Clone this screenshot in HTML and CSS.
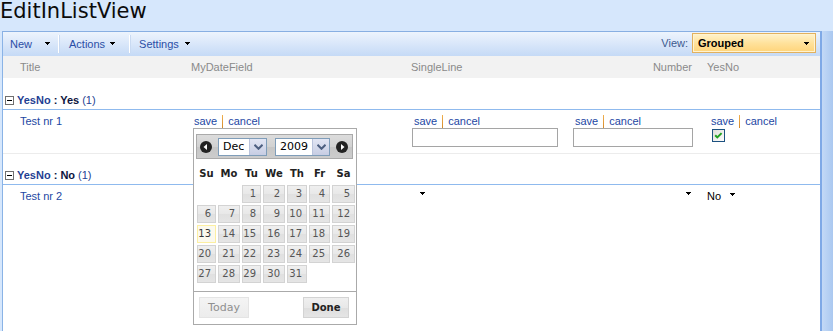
FILE: index.html
```html
<!DOCTYPE html>
<html>
<head>
<meta charset="utf-8">
<title>EditInListView</title>
<link rel="stylesheet" href="styles.css">
</head>
<body>
<div class="page">
  <h1 class="title">EditInListView</h1>
  <div class="content-row">
    <div class="panel">
      <div class="toolbar">
        <div class="tb-menu">
          <div class="tb-item tb-new"><span class="tb-text">New</span><svg class="arrow" width="5" height="3" viewBox="0 0 5 3"><path d="M0 0h5v1h-1v1h-1v1h-1v-1h-1v-1h-1z"/></svg></div>
          <div class="tb-sep"></div>
          <div class="tb-item tb-actions"><span class="tb-text">Actions</span><svg class="arrow" width="5" height="3" viewBox="0 0 5 3"><path d="M0 0h5v1h-1v1h-1v1h-1v-1h-1v-1h-1z"/></svg></div>
          <div class="tb-sep"></div>
          <div class="tb-item tb-settings"><span class="tb-text">Settings</span><svg class="arrow" width="5" height="3" viewBox="0 0 5 3"><path d="M0 0h5v1h-1v1h-1v1h-1v-1h-1v-1h-1z"/></svg></div>
        </div>
        <div class="tb-view">
          <span class="view-label">View:</span>
          <div class="view-select"><span class="view-value">Grouped</span><svg class="arrow" width="5" height="3" viewBox="0 0 5 3"><path d="M0 0h5v1h-1v1h-1v1h-1v-1h-1v-1h-1z"/></svg></div>
        </div>
      </div>

      <div class="cols colheads">
        <div class="c c1">Title</div>
        <div class="c c2">MyDateField</div>
        <div class="c c3">SingleLine</div>
        <div class="c c4">Number</div>
        <div class="c c5">YesNo</div>
      </div>

      <div class="gap-top"></div>

      <div class="group">
        <span class="grp-icon"></span>
        <span class="grp-field">YesNo</span><span class="grp-value"> : Yes</span><span class="grp-count">(1)</span>
      </div>

      <div class="cols row row-edit">
        <div class="c c1"><span class="cell-text">Test nr 1</span></div>
        <div class="c c2 edit"><div class="links"><a class="lnk">save</a><span class="bar"></span><a class="lnk">cancel</a></div></div>
        <div class="c c3 edit"><div class="links"><a class="lnk">save</a><span class="bar"></span><a class="lnk">cancel</a></div><div class="textbox tb-single"></div></div>
        <div class="c c4 edit"><div class="links"><a class="lnk">save</a><span class="bar"></span><a class="lnk">cancel</a></div><div class="textbox tb-number"></div></div>
        <div class="c c5 edit"><div class="links"><a class="lnk">save</a><span class="bar"></span><a class="lnk">cancel</a></div>
          <svg class="checkbox" width="13" height="13" viewBox="0 0 13 13">
            <defs><linearGradient id="cbg" x1="0" y1="0" x2="1" y2="1"><stop offset="0" stop-color="#dcdcd7"/><stop offset="1" stop-color="#ffffff"/></linearGradient></defs>
            <rect x="0.5" y="0.5" width="12" height="12" fill="url(#cbg)" stroke="#1c5180"/>
            <path d="M3.2 6.2L5.3 8.4 9.6 4.1" fill="none" stroke="#21a121" stroke-width="2"/>
          </svg>
        </div>
      </div>

      <div class="gap-mid"></div>

      <div class="group">
        <span class="grp-icon"></span>
        <span class="grp-field">YesNo</span><span class="grp-value"> : No</span><span class="grp-count">(1)</span>
      </div>

      <div class="cols row row-view">
        <div class="c c1"><span class="cell-text">Test nr 2</span></div>
        <div class="c c2"></div>
        <div class="c c3"><svg class="arrow" width="5" height="3" viewBox="0 0 5 3"><path d="M0 0h5v1h-1v1h-1v1h-1v-1h-1v-1h-1z"/></svg></div>
        <div class="c c4"><svg class="arrow" width="5" height="3" viewBox="0 0 5 3"><path d="M0 0h5v1h-1v1h-1v1h-1v-1h-1v-1h-1z"/></svg></div>
        <div class="c c5"><span class="no-text">No</span><svg class="arrow" width="5" height="3" viewBox="0 0 5 3"><path d="M0 0h5v1h-1v1h-1v1h-1v-1h-1v-1h-1z"/></svg></div>
      </div>

      <div class="calendar">
        <div class="cal-header">
          <span class="cal-nav"><svg width="12" height="12" viewBox="0 0 12 12"><circle cx="6" cy="6" r="6" fill="#222"/><path d="M3.5 6L7 3v6z" fill="#fff"/></svg></span>
          <div class="cal-select cal-month"><span class="cal-sel-text">Dec</span><span class="cal-sel-btn"><svg width="9" height="6" viewBox="0 0 9 6"><path d="M0.5 0.8L4.5 4.8 8.5 0.8" fill="none" stroke="#4d5f80" stroke-width="2"/></svg></span></div>
          <div class="cal-select cal-year"><span class="cal-sel-text">2009</span><span class="cal-sel-btn"><svg width="9" height="6" viewBox="0 0 9 6"><path d="M0.5 0.8L4.5 4.8 8.5 0.8" fill="none" stroke="#4d5f80" stroke-width="2"/></svg></span></div>
          <span class="cal-nav cal-next"><svg width="12" height="12" viewBox="0 0 12 12"><circle cx="6" cy="6" r="6" fill="#222"/><path d="M8.5 6L5 3v6z" fill="#fff"/></svg></span>
        </div>
        <div class="cal-days cal-dow">
          <span>Su</span><span>Mo</span><span>Tu</span><span>We</span><span>Th</span><span>Fr</span><span>Sa</span>
        </div>
        <div class="cal-days cal-grid">
          <span class="empty"></span><span class="empty"></span><span class="d">1</span><span class="d">2</span><span class="d">3</span><span class="d">4</span><span class="d">5</span>
          <span class="d">6</span><span class="d">7</span><span class="d">8</span><span class="d">9</span><span class="d">10</span><span class="d">11</span><span class="d">12</span>
          <span class="d today">13</span><span class="d">14</span><span class="d">15</span><span class="d">16</span><span class="d">17</span><span class="d">18</span><span class="d">19</span>
          <span class="d">20</span><span class="d">21</span><span class="d">22</span><span class="d">23</span><span class="d">24</span><span class="d">25</span><span class="d">26</span>
          <span class="d">27</span><span class="d">28</span><span class="d">29</span><span class="d">30</span><span class="d">31</span><span class="empty"></span><span class="empty"></span>
        </div>
        <div class="cal-buttons">
          <span class="cal-btn cal-today">Today</span>
          <span class="cal-btn cal-done">Done</span>
        </div>
      </div>
    </div>
    <div class="strip"></div>
  </div>
</div>
</body>
</html>
```

FILE: styles.css
```css
html, body {
  margin: 0;
  padding: 0;
  height: 100%;
}
body {
  background: #d6e7fc;
  font-family: "Liberation Sans", Arial, sans-serif;
  font-size: 11px;
  color: #000;
  overflow: hidden;
}
.page {
  height: 100vh;
  display: flex;
  flex-direction: column;
}
.title {
  margin: 0;
  height: 31px;
  font-family: "DejaVu Sans", Verdana, sans-serif;
  font-weight: normal;
  font-size: 21px;
  line-height: 23px;
  color: #0b0b0b;
  padding-left: 0;
  flex: none;
}
.content-row {
  flex: 1;
  display: flex;
  min-height: 0;
}
.panel {
  position: relative;
  margin-left: 2px;
  width: 817px;
  flex: none;
  background: #fff;
  border-top: 1px solid #88afe2;
  border-left: 1px solid #8ab3e6;
  border-right: 2px solid #7fa9e6;
}
.strip {
  flex: 1;
  background: linear-gradient(to right, #c3d9f6, #aac8f0);
}

/* toolbar */
.toolbar {
  height: 24px;
  display: flex;
  justify-content: space-between;
  background: linear-gradient(#edf4fd, #dbe8fa 45%, #c5daf6);
}
.tb-menu {
  display: flex;
  align-items: center;
  padding-bottom: 1px;
}
.tb-item {
  display: flex;
  align-items: center;
  color: #2a4ea6;
}
.tb-new { padding: 0 8px 0 7px; }
.tb-new .arrow { margin-left: 13px; }
.tb-actions { padding: 0 14px 0 10px; }
.tb-actions .arrow { margin-left: 5px; }
.tb-settings { padding: 0 0 0 9px; }
.tb-settings .arrow { margin-left: 6px; }
.tb-sep {
  width: 1px;
  height: 18px;
  background: #ffffff;
  box-shadow: 1px 0 0 #c9daf2;
}
.arrow {
  display: block;
  fill: #000;
  flex: none;
}
.tb-view {
  display: flex;
  align-items: flex-start;
  padding-right: 4px;
}
.view-label {
  color: #3c5a8f;
  margin-top: 5px;
  margin-right: 4px;
}
.view-select {
  margin-top: 1px;
  width: 124px;
  height: 20px;
  box-sizing: border-box;
  border: 1px solid #e2b15e;
  box-shadow: inset 0 0 0 1px #fff3d0;
  background: linear-gradient(#fff3cc, #ffe29c 50%, #ffd47a);
  display: flex;
  align-items: center;
  justify-content: space-between;
  padding: 0 6px 0 5px;
}
.view-value {
  font-weight: bold;
  color: #000;
}

/* column grid */
.cols {
  display: grid;
  grid-template-columns: 185px 220px 162px 132px 1fr;
}
.colheads {
  height: 22px;
  background: #f2f2f2;
  color: #8a8a8a;
  align-items: center;
  padding-bottom: 1px;
  box-sizing: border-box;
}
.colheads .c1 { padding-left: 17px; }
.colheads .c2 { padding-left: 3px; }
.colheads .c3 { padding-left: 3px; }
.colheads .c4 { text-align: right; padding-right: 10px; }
.colheads .c5 { padding-left: 5px; }

.gap-top { height: 13px; }
.gap-mid { height: 12px; }

.group {
  height: 18px;
  border-bottom: 1px solid #8fbaee;
  display: flex;
  align-items: center;
  padding-left: 2px;
}
.grp-icon {
  width: 7px;
  height: 7px;
  border: 1px solid #6f6f6f;
  background: #fff;
  position: relative;
  margin-right: 3px;
  flex: none;
}
.grp-icon::after {
  content: "";
  position: absolute;
  left: 1px;
  top: 3px;
  width: 5px;
  height: 1px;
  background: #000;
}
.grp-field {
  font-weight: bold;
  color: #1f3f93;
}
.grp-value {
  font-weight: bold;
  color: #0d1440;
  white-space: pre;
}
.grp-count {
  color: #1f3f93;
  margin-left: 3px;
}

.row .c {
  padding-top: 4px;
  line-height: 14px;
}
.row-edit {
  height: 43px;
  border-bottom: 1px solid #ececec;
}
.row-view {
  height: 30px;
}
.row .c1 { padding-left: 17px; }
.cell-text { color: #1d47a3; }

.edit .links {
  display: flex;
  align-items: center;
  height: 14px;
}
.lnk { color: #1d47a3; }
.bar {
  display: inline-block;
  width: 1px;
  height: 13px;
  background: linear-gradient(#f0b050, #d58a2a);
  margin: 0 5px;
}
.row .c2.edit { padding-left: 6px; }
.row .c3.edit { padding-left: 4px; }
.row .c3.edit .links { margin-left: 2px; }
.row .c4.edit { padding-left: 3px; }
.row .c4.edit .links { margin-left: 2px; }
.row .c5.edit { padding-left: 9px; }

.textbox {
  height: 19px;
  box-sizing: border-box;
  border: 1px solid #a5a5a5;
  background: #fff;
}
.tb-single { width: 146px; }
.tb-number { width: 120px; }
.checkbox {
  display: block;
  margin-top: 1px;
  margin-left: 1px;
}

.row-view .c3 { padding-left: 12px; padding-top: 7px; }
.row-view .c4 { padding-top: 7px; display: flex; justify-content: flex-end; padding-right: 11px; align-items: flex-start; }
.row-view .c5 {
  padding-left: 5px;
  display: flex;
  align-items: center;
  height: 14px;
}
.no-text { color: #000; }
.row-view .c5 .arrow { margin-left: 9px; margin-top: -4px; }

/* calendar popup */
.calendar {
  position: absolute;
  left: 190px;
  top: 96px;
  width: 164px;
  box-sizing: border-box;
  border: 1px solid #aaaaaa;
  background: #fff;
  padding: 2px 1px 0 2px;
  font-family: "DejaVu Sans", Verdana, sans-serif;
  z-index: 5;
}
.cal-header {
  margin-top: 3px;
  width: 157px;
  height: 25px;
  box-sizing: border-box;
  border: 1px solid #aaaaaa;
  background: linear-gradient(#dcdcdc, #d2d2d2 50%, #c6c6c6 51%, #cccccc);
  display: flex;
  align-items: center;
  padding-left: 3px;
}
.cal-nav {
  display: block;
  width: 12px;
  height: 12px;
  flex: none;
}
.cal-nav svg { display: block; }
.cal-select {
  height: 18px;
  box-sizing: border-box;
  border: 1px solid #7f9db9;
  background: #fff;
  display: flex;
  align-items: stretch;
  justify-content: space-between;
  font-size: 11px;
  color: #000;
}
.cal-month { width: 49px; margin-left: 6px; }
.cal-year { width: 55px; margin-left: 8px; }
.cal-next { margin-left: 6px; }
.cal-sel-text {
  padding-left: 4px;
  line-height: 16px;
}
.cal-sel-btn {
  width: 16px;
  margin: 0;
  border-left: 1px solid #b9c3dc;
  background: linear-gradient(#e2e6f4, #c7cde3);
  display: flex;
  align-items: center;
  justify-content: center;
}
.cal-sel-btn svg { display: block; }

.cal-days {
  display: grid;
  grid-template-columns: 19px 22px 19px 22px 20px 21px 23px;
  column-gap: 2px;
  margin-left: 1px;
}
.cal-dow {
  margin-top: 4px;
  height: 20px;
  align-items: center;
  font-weight: bold;
  font-size: 10px;
  color: #222;
  text-align: center;
}
.cal-dow span { white-space: nowrap; }
.cal-grid {
  margin-top: 2px;
  grid-auto-rows: 18px;
  row-gap: 2px;
}
.cal-grid .d {
  box-sizing: border-box;
  border: 1px solid #d3d3d3;
  background: linear-gradient(#efefef, #e8e8e8 50%, #e0e0e0 51%, #e5e5e5);
  color: #555555;
  font-size: 10px;
  line-height: 16px;
  text-align: right;
  padding-right: 4px;
}
.cal-grid .today {
  border-color: #fcefa1;
  background: #fbf9ee;
  color: #363636;
}
.cal-buttons {
  margin-top: 8px;
  border-top: 1px solid #aaaaaa;
  margin-left: -2px;
  margin-right: -1px;
  padding: 5px 7px 6px 5px;
  display: flex;
  justify-content: space-between;
}
.cal-btn {
  height: 21px;
  box-sizing: border-box;
  display: flex;
  align-items: center;
  justify-content: center;
  font-size: 11px;
}
.cal-today {
  width: 50px;
  border: 1px solid #e4e4e4;
  background: linear-gradient(#f4f4f4, #ececec);
  color: #8f8f8f;
}
.cal-done {
  width: 46px;
  border: 1px solid #d3d3d3;
  background: linear-gradient(#efefef, #e8e8e8 50%, #dedede 51%, #e5e5e5);
  color: #222;
  font-weight: bold;
  font-size: 10px;
}
```
